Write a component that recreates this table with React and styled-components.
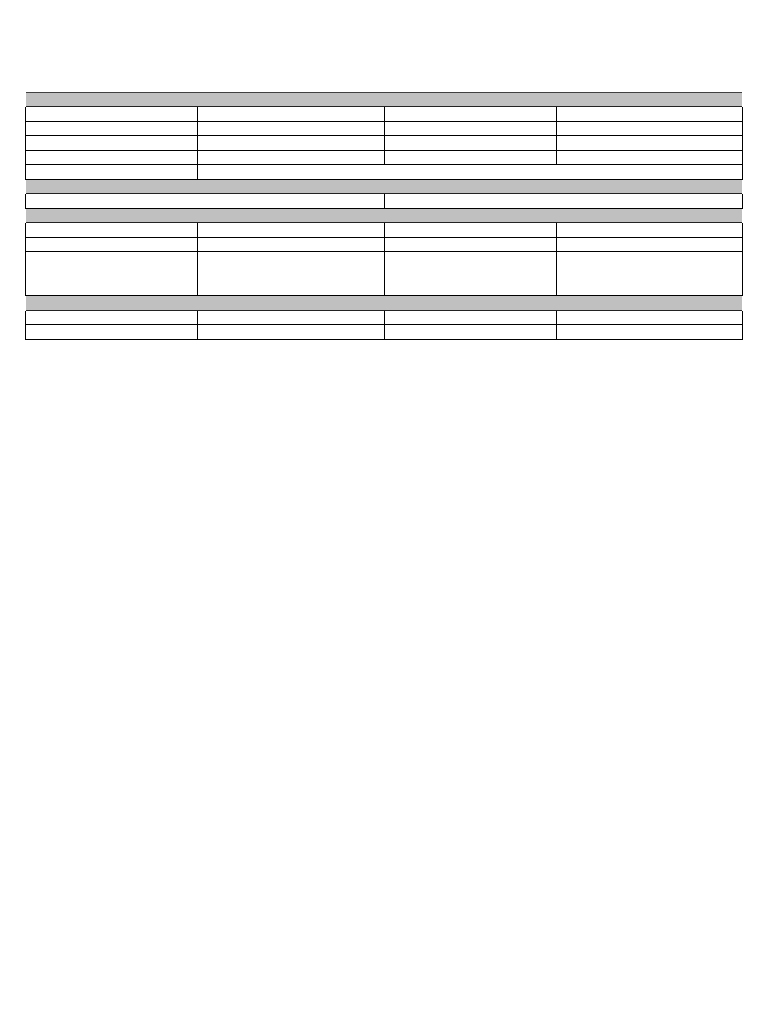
import React from "react";
import styled, { createGlobalStyle } from "styled-components";

const GlobalStyle = createGlobalStyle`
  body {
    margin: 0;
    background: #fff;
    font-family: "Liberation Sans", Arial, sans-serif;
    font-size: 11px;
  }
`;

// each section: a grey band, then rows of blank cells (numbers are column spans)
const sections = [
  [[1, 1, 1, 1], [1, 1, 1, 1], [1, 1, 1, 1], [1, 1, 1, 1], [1, 3]],
  [[2, 2]],
  [[1, 1, 1, 1], [1, 1, 1, 1], { tall: true, cells: [1, 1, 1, 1] }],
  [[1, 1, 1, 1], [1, 1, 1, 1]],
];

function App() {
  return (
    <>
      <GlobalStyle />
      <Sheet>
        {sections.map((rows, i) => (
          <React.Fragment key={i}>
            <Band $first={i === 0} />
            {rows.map((row, j) => {
              const cells = Array.isArray(row) ? row : row.cells;
              return (
                <Row key={j} $tall={row.tall}>
                  {cells.map((span, k) => (
                    <Cell key={k} $span={span} />
                  ))}
                </Row>
              );
            })}
          </React.Fragment>
        ))}
      </Sheet>
    </>
  );
}

const Sheet = styled.div`
  display: flex;
  flex-direction: column;
  width: 718px;
  margin: 92px 0 0 25px;
`;

const Band = styled.div`
  box-sizing: border-box;
  height: ${(p) => (p.$first ? "15px" : "14.5px")};
  margin: 0 1px 0 1px;
  background: #c0c0c0;
  border-top: ${(p) => (p.$first ? "1px solid #404040" : "none")};
  border-bottom: 1px solid #222;
`;

const Row = styled.div`
  display: grid;
  grid-template-columns: 173px 187px 172px 186px;
  height: ${(p) => (p.$tall ? "44px" : "14.5px")};
`;

const Cell = styled.div`
  box-sizing: border-box;
  grid-column: span ${(p) => p.$span};
  border-right: 1px solid #000;
  border-bottom: 1px solid #000;

  &:first-child {
    border-left: 1px solid #000;
  }
`;

export default App;
